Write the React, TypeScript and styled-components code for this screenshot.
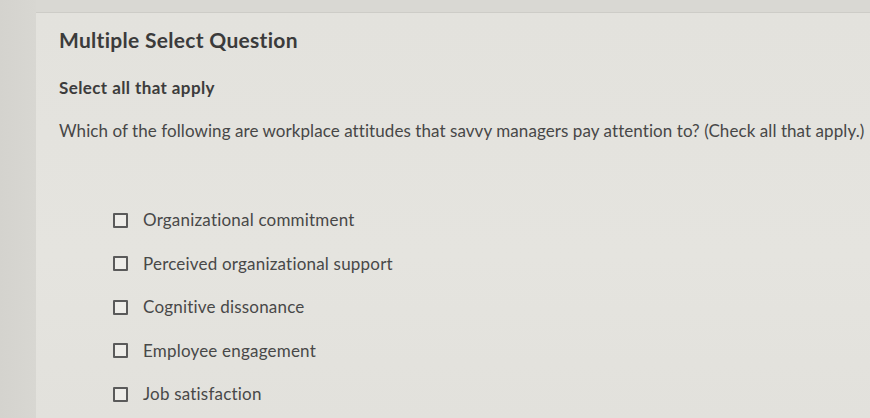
import React from "react";
import styled, { createGlobalStyle } from "styled-components";

const Global = createGlobalStyle`
  html, body { margin: 0; padding: 0; }
  body {
    width: 870px;
    height: 418px;
    overflow: hidden;
    background: #d9d8d3;
    font-family: Lato, "Open Sans", Arial, sans-serif;
  }
`;

const Page = styled.div`
  display: flex;
  flex-direction: column;
  width: 870px;
  height: 418px;
  padding-top: 12px;
  box-sizing: border-box;
  background: linear-gradient(90deg, #d4d3ce 0px, #d8d7d2 36px, #d9d8d3 36px);
`;

const Panel = styled.main`
  flex: 1;
  margin-left: 36px;
  border-top: 1px solid #cdccc7;
  background: linear-gradient(180deg, #e3e2dd 0%, #e5e4df 60%, #e2e1dc 100%);
  padding: 14px 0 0 23px;
  display: flex;
  flex-direction: column;
`;

const Title = styled.h1`
  margin: 0;
  font-size: 21px;
  font-weight: 700;
  color: #3b3b3b;
  line-height: 26px;
  letter-spacing: 0.3px;
`;

const Subtitle = styled.h2`
  margin: 24px 0 0;
  font-size: 17px;
  font-weight: 700;
  color: #3c3c3c;
  line-height: 22px;
  letter-spacing: 0.4px;
`;

const Prompt = styled.p`
  margin: 21px 0 0;
  font-size: 17px;
  font-weight: 400;
  color: #474747;
  line-height: 22px;
  white-space: nowrap;
  letter-spacing: 0.07px;
`;

const Options = styled.ul`
  list-style: none;
  margin: 67px 0 0;
  padding: 0 0 0 54px;
  display: flex;
  flex-direction: column;
  gap: 21.5px;
`;

const Option = styled.li`
  display: flex;
  align-items: center;
  gap: 15px;
  height: 22px;
`;

const Box = styled.span`
  width: 11px;
  height: 11px;
  border: 2px solid #5a5a5a;
  border-radius: 1px;
  background: #eeede9;
  flex: none;
`;

const Label = styled.span`
  font-size: 17px;
  color: #484848;
  line-height: 22px;
  letter-spacing: 0.2px;
`;

const options = [
  "Organizational commitment",
  "Perceived organizational support",
  "Cognitive dissonance",
  "Employee engagement",
  "Job satisfaction",
];

export default function App() {
  return (
    <>
      <Global />
      <Page>
        <Panel>
          <Title>Multiple Select Question</Title>
          <Subtitle>Select all that apply</Subtitle>
          <Prompt>
            Which of the following are workplace attitudes that savvy managers pay attention to? (Check all that apply.)
          </Prompt>
          <Options>
            {options.map((o) => (
              <Option key={o}>
                <Box />
                <Label>{o}</Label>
              </Option>
            ))}
          </Options>
        </Panel>
      </Page>
    </>
  );
}
